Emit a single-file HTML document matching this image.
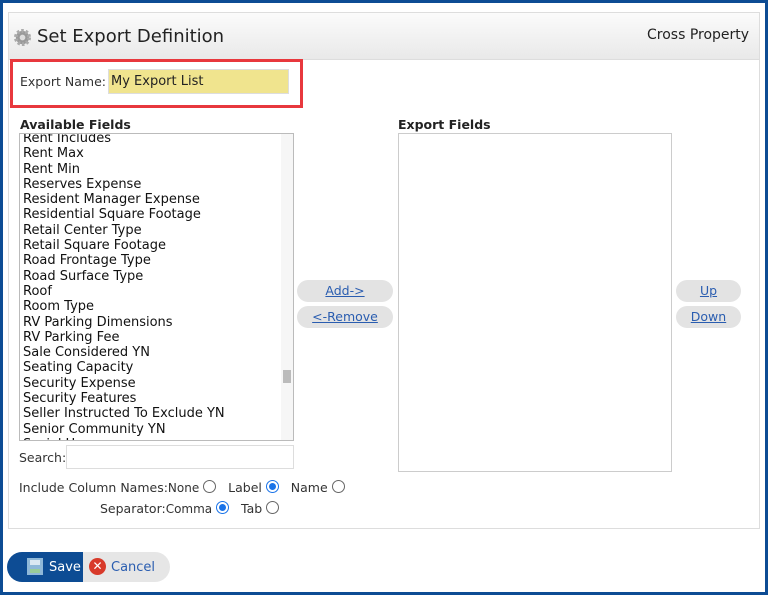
<!DOCTYPE html>
<html><head><style>
body{margin:0;width:768px;height:595px;overflow:hidden;background:#fff;font-family:"DejaVu Sans",Verdana,sans-serif;position:relative}
.frame{position:absolute;left:0;top:0;width:762px;height:589px;border:3px solid #0d4c94;}
.panel{position:absolute;left:8px;top:12px;width:750px;height:515px;border:1px solid #ddd;}
.hdr{position:absolute;left:0;top:0;width:750px;height:46px;background:linear-gradient(#fbfbfb,#e9e9e9);border-bottom:1px solid #ddd}
.t{position:absolute;white-space:nowrap;color:#222}
.list{position:absolute;left:19px;top:133px;width:273px;height:306px;border:1px solid #bbb;overflow:hidden;background:#fff}
.list div{font-size:13px;height:15.3px;line-height:15.3px;padding-left:3px;color:#111}
.btn{position:absolute;height:22px;border-radius:11px;background:#e3e3e3;color:#2a5db0;text-decoration:underline;font-size:12.5px;text-align:center;line-height:22px}
.radio{display:inline-block;width:11px;height:11px;border:1px solid #666;border-radius:50%;vertical-align:-1px;background:#fff;position:relative}
.radio.on{border-color:#1a73e8}
.radio.on:after{content:"";position:absolute;left:2px;top:2px;width:7px;height:7px;border-radius:50%;background:#1a73e8}
</style></head><body>
<div class="frame"></div>
<div class="panel"><div class="hdr"></div></div>
<svg style="position:absolute;left:13px;top:28px" width="19" height="19" viewBox="0 0 20 20"><circle cx="10" cy="10" r="7" fill="#999" stroke="#aaa" stroke-width="4" stroke-dasharray="2.5 2"/><circle cx="10" cy="10" r="3" fill="#ddd"/></svg>
<div class="t" style="left:37px;top:26px;font-size:18px">Set Export Definition</div>
<div class="t" style="left:647px;top:27px;font-size:14px">Cross Property</div>
<div style="position:absolute;left:10px;top:59px;width:287px;height:43px;border:3px solid #e8383d"></div>
<div class="t" style="left:20px;top:74px;font-size:12.5px;color:#333">Export Name:</div>
<div style="position:absolute;left:108px;top:69px;width:179px;height:23px;background:#f0e48e;border:1px solid #ddd"></div>
<div class="t" style="left:111px;top:74px;font-size:13px">My Export List</div>
<div class="t" style="left:20px;top:117px;font-size:12.5px;font-weight:bold">Available Fields</div>
<div class="t" style="left:398px;top:117px;font-size:12.5px;font-weight:bold">Export Fields</div>
<div class="list"><div style="margin-top:-3px">Rent Includes</div><div>Rent Max</div><div>Rent Min</div><div>Reserves Expense</div><div>Resident Manager Expense</div><div>Residential Square Footage</div><div>Retail Center Type</div><div>Retail Square Footage</div><div>Road Frontage Type</div><div>Road Surface Type</div><div>Roof</div><div>Room Type</div><div>RV Parking Dimensions</div><div>RV Parking Fee</div><div>Sale Considered YN</div><div>Seating Capacity</div><div>Security Expense</div><div>Security Features</div><div>Seller Instructed To Exclude YN</div><div>Senior Community YN</div><div>Social Use</div>
<span style="position:absolute;right:0;top:0;width:12px;height:306px;background:#f6f6f6"></span>
<span style="position:absolute;right:2px;top:236px;width:8px;height:13px;background:#bbb"></span></div>
<div style="position:absolute;left:398px;top:133px;width:272px;height:337px;border:1px solid #ccc"></div>
<div class="btn" style="left:297px;top:280px;width:96px">Add-&gt;</div>
<div class="btn" style="left:297px;top:306px;width:96px">&lt;-Remove</div>
<div class="btn" style="left:676px;top:280px;width:65px">Up</div>
<div class="btn" style="left:676px;top:306px;width:65px">Down</div>
<div class="t" style="left:19px;top:450px;font-size:12.5px;color:#333">Search:</div>
<div style="position:absolute;left:66px;top:445px;width:226px;height:22px;border:1px solid #ddd"></div>
<div class="t" style="left:19px;top:480px;font-size:12.5px;color:#333">Include Column Names:<span style="font-size:12px">None</span> <span class="radio"></span> &nbsp; Label <span class="radio on"></span> &nbsp; Name <span class="radio"></span></div>
<div class="t" style="left:100px;top:501px;font-size:12.5px;color:#333">Separator:<span style="font-size:12px">Comma</span> <span class="radio on"></span> &nbsp; Tab <span class="radio"></span></div>
<div style="position:absolute;left:7px;top:552px;width:163px;height:30px;border-radius:15px;background:#e6e6e6"></div>
<div style="position:absolute;left:7px;top:552px;width:76px;height:30px;border-radius:15px 0 0 15px;background:#0d4c94"></div>
<div style="position:absolute;left:27px;top:558px;width:16px;height:17px;background:#8fb8d8"><div style="margin:2px 3px;height:5px;background:#dbe8f2"></div><div style="margin:4px 3px 0;height:4px;background:#9c9"></div></div>
<div class="t" style="left:49px;top:560px;font-size:13px;color:#fff">Save</div>
<div style="position:absolute;left:89px;top:558px;width:17px;height:17px;border-radius:50%;background:#d83a2a;color:#fff;font-size:12px;font-weight:bold;text-align:center;line-height:17px">✕</div>
<div class="t" style="left:111px;top:560px;font-size:13px;color:#2a5db0">Cancel</div>
</body></html>
